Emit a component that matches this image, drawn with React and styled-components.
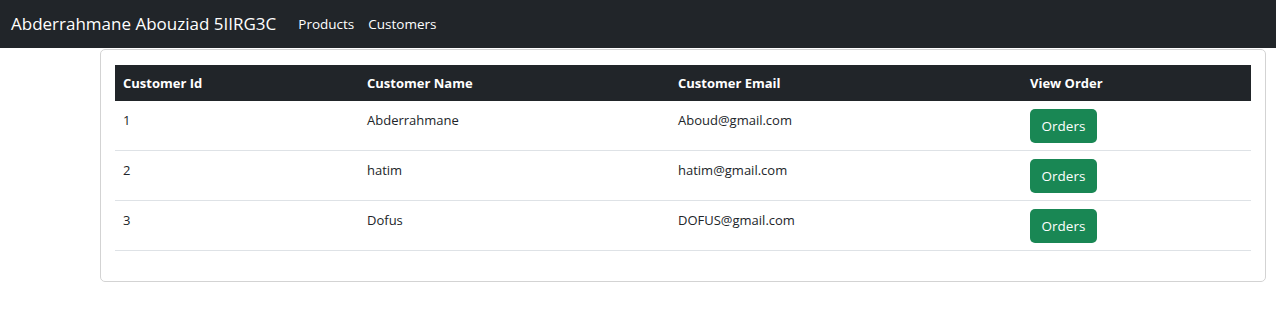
import styled, { createGlobalStyle } from 'styled-components';

const GlobalStyle = createGlobalStyle`
  * {
    box-sizing: border-box;
  }

  body {
    margin: 0;
    background: #fff;
    font-family: 'Open Sans', 'Noto Sans', Arial, sans-serif;
    color: #212529;
  }
`;

const Navbar = styled.nav`
  display: flex;
  align-items: center;
  height: 48px;
  padding: 0 11px 1px;
  background: #212529;
`;

const Brand = styled.a`
  font-size: 17px;
  color: #fff;
  margin-right: 22px;
  text-decoration: none;
`;

const NavLinks = styled.div`
  display: flex;
  gap: 14px;
`;

const NavLink = styled.a`
  font-size: 13.5px;
  color: #fff;
  text-decoration: none;
`;

const Page = styled.main`
  padding: 1px 10px 0 100px;
`;

const Card = styled.section`
  border: 1px solid #d3d3d3;
  border-radius: 5px;
  padding: 15px 14px 30px;
`;

const Table = styled.table`
  width: 100%;
  border-collapse: collapse;
  font-size: 13px;

  th {
    background: #212529;
    color: #fff;
    font-weight: 700;
    text-align: left;
    height: 36px;
    padding: 0 8px;
  }

  td {
    vertical-align: top;
    padding: 10px 8px 0;
    height: 49.8px;
    border-bottom: 1px solid #dee2e6;
  }
`;

const Cell = styled.td`
  width: ${(p) => p.$w}px;
`;

const OrdersButton = styled.button`
  margin-top: -2px;
  width: 67px;
  height: 34px;
  border: none;
  border-radius: 5px;
  background: #198754;
  color: #fff;
  font-family: inherit;
  font-size: 13.5px;
  cursor: pointer;
`;

const customers = [
  { id: 1, name: 'Abderrahmane', email: 'Aboud@gmail.com' },
  { id: 2, name: 'hatim', email: 'hatim@gmail.com' },
  { id: 3, name: 'Dofus', email: 'DOFUS@gmail.com' },
];

export default function App() {
  return (
    <>
      <GlobalStyle />
      <Navbar>
        <Brand href="#">Abderrahmane Abouziad 5IIRG3C</Brand>
        <NavLinks>
          <NavLink href="#">Products</NavLink>
          <NavLink href="#">Customers</NavLink>
        </NavLinks>
      </Navbar>
      <Page>
        <Card>
          <Table>
            <thead>
              <tr>
                <th style={{ width: 244 }}>Customer Id</th>
                <th style={{ width: 311 }}>Customer Name</th>
                <th style={{ width: 352 }}>Customer Email</th>
                <th>View Order</th>
              </tr>
            </thead>
            <tbody>
              {customers.map((c) => (
                <tr key={c.id}>
                  <Cell $w={244}>{c.id}</Cell>
                  <Cell $w={311}>{c.name}</Cell>
                  <Cell $w={352}>{c.email}</Cell>
                  <td>
                    <OrdersButton>Orders</OrdersButton>
                  </td>
                </tr>
              ))}
            </tbody>
          </Table>
        </Card>
      </Page>
    </>
  );
}
